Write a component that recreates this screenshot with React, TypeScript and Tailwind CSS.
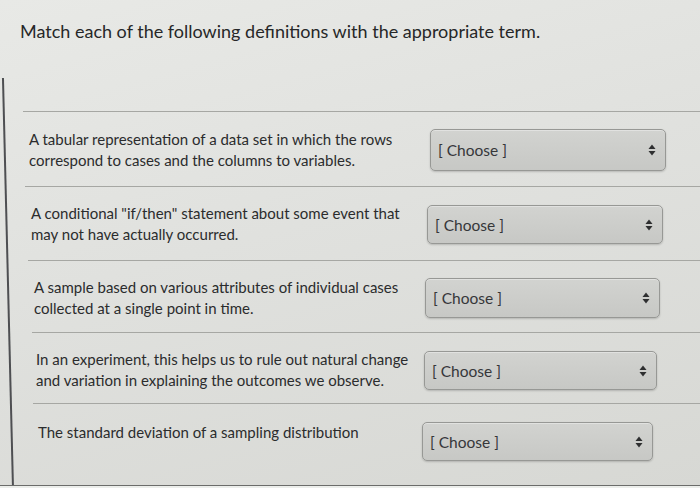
import React from "react";

type Row = {
  lines: string[];
  rowCls: string;
  textCls: string;
  ddCls: string;
};

const rows: Row[] = [
  {
    lines: ["A tabular representation of a data set in which the rows", "correspond to cases and the columns to variables."],
    rowCls: "ml-[23px] h-[75px]",
    textCls: "pl-[6px] w-[407px] pt-[17px]",
    ddCls: "w-[236px] h-[42px] mt-[17px]",
  },
  {
    lines: ["A conditional \"if/then\" statement about some event that", "may not have actually occurred."],
    rowCls: "ml-[25px] h-[74px]",
    textCls: "pl-[6px] w-[402px] pt-[16px]",
    ddCls: "w-[236px] h-[39px] mt-[18px]",
  },
  {
    lines: ["A sample based on various attributes of individual cases", "collected at a single point in time."],
    rowCls: "ml-[28px] h-[72px]",
    textCls: "pl-[6px] w-[397px] pt-[16px]",
    ddCls: "w-[235px] h-[40px] mt-[17px]",
  },
  {
    lines: ["In an experiment, this helps us to rule out natural change", "and variation in explaining the outcomes we observe."],
    rowCls: "ml-[32px] h-[71px]",
    textCls: "pl-[4px] w-[392px] pt-[16px]",
    ddCls: "w-[233px] h-[39px] mt-[18px]",
  },
  {
    lines: ["The standard deviation of a sampling distribution"],
    rowCls: "ml-[33px] h-[82px]",
    textCls: "pl-[5px] w-[389px] pt-[18px]",
    ddCls: "w-[231px] h-[39px] mt-[18px]",
  },
];

function Arrows() {
  return (
    <svg width="8" height="12" viewBox="0 0 8 12" className="shrink-0">
      <path d="M4 0.5 L7.5 5 L0.5 5 Z" fill="#2e2f30" />
      <path d="M4 11.5 L7.5 7 L0.5 7 Z" fill="#2e2f30" />
    </svg>
  );
}

export default function App() {
  return (
    <div
      className="relative w-[700px] h-[488px] overflow-hidden bg-[linear-gradient(165deg,#e8e9e6_0%,#e0e1de_45%,#d7d8d4_100%)] text-[#2b2c2d]"
      style={{ fontFamily: "Lato, 'Open Sans', sans-serif" }}
    >
      <div className="pt-[19px] pl-[20px] h-[111px] text-[18px] leading-[24px] text-[#262728]">
        Match each of the following definitions with the appropriate term.
      </div>
      {rows.map((r, i) => (
        <div key={i} className={`flex items-start border-t border-[#a6a7a3] ${r.rowCls}`}>
          <div className={`${r.textCls} shrink-0 text-[15px] leading-[21px]`}>
            {r.lines.map((l, j) => (
              <div key={j}>{l}</div>
            ))}
          </div>
          <div
            className={`${r.ddCls} shrink-0 flex items-center justify-between pl-[7px] pr-[9px] rounded-[5px] border border-[#979895] bg-[linear-gradient(180deg,#d2d3d0_0%,#c7c8c5_100%)] shadow-[0_1px_2px_rgba(0,0,0,0.18),inset_0_1px_0_rgba(255,255,255,0.35)]`}
          >
            <span className="text-[15.5px] leading-[20px] text-[#36373a]">[ Choose ]</span>
            <Arrows />
          </div>
        </div>
      ))}
      <div className="absolute left-[7px] top-[78px] h-[412px] w-[2px] bg-[#4e4f52] -rotate-[1.4deg]" />
      <div className="absolute left-0 right-0 bottom-0 h-[3px] bg-[#eceeeb] border-t border-[#6b6c6a]" />
    </div>
  );
}
